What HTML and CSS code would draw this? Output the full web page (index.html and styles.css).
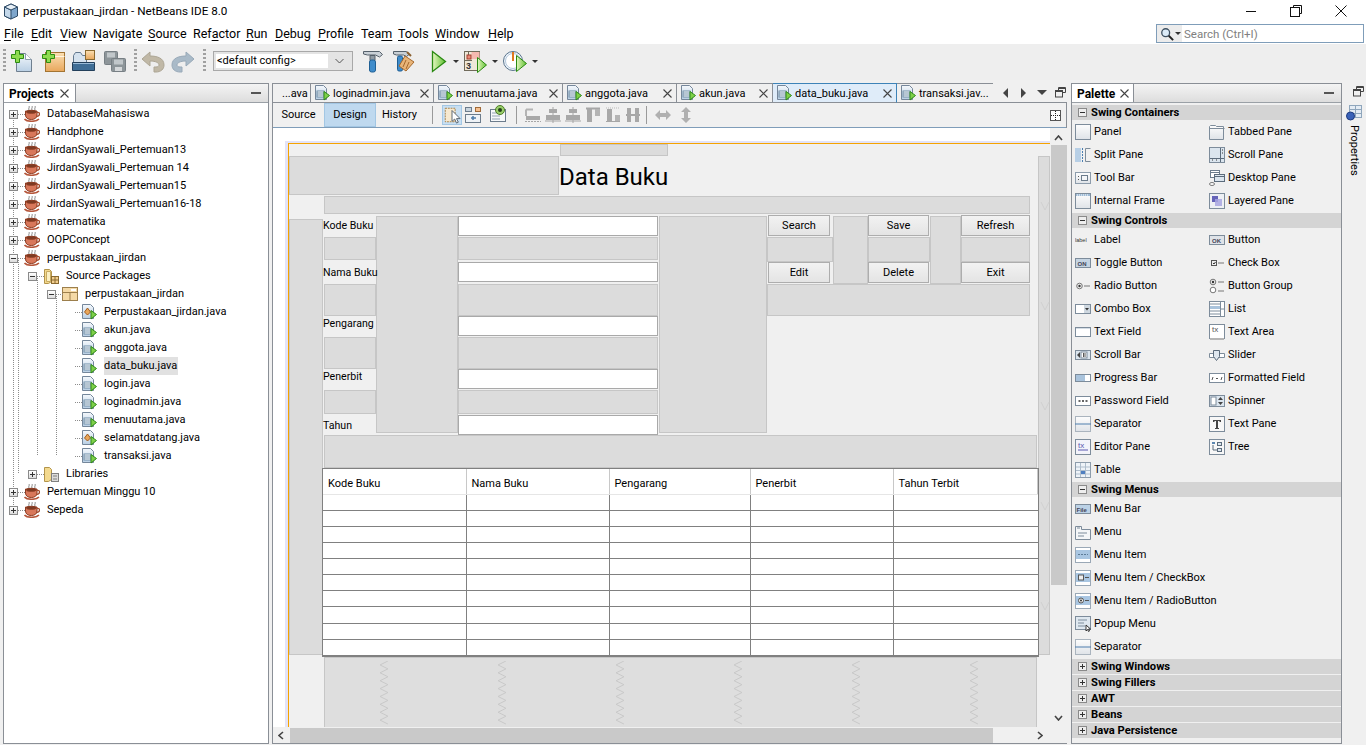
FILE: index.html
```html
<!DOCTYPE html>
<html lang="en">
<head>
<meta charset="utf-8">
<title>perpustakaan_jirdan - NetBeans IDE 8.0</title>
<link rel="stylesheet" href="styles.css">
</head>
<body>
<svg class="defs" width="0" height="0" aria-hidden="true">
  <defs>
    <linearGradient id="lb" x1="0" y1="0" x2="0" y2="1"><stop offset="0" stop-color="#f4f8fc"/><stop offset="1" stop-color="#b9cfe4"/></linearGradient>
    <linearGradient id="org" x1="0" y1="0" x2="0" y2="1"><stop offset="0" stop-color="#fbe0b4"/><stop offset="1" stop-color="#e8a75c"/></linearGradient>
    <linearGradient id="grn" x1="0" y1="0" x2="1" y2="0"><stop offset="0" stop-color="#e4f7c0"/><stop offset="1" stop-color="#5fc030"/></linearGradient>
    <linearGradient id="pan" x1="0" y1="0" x2="0" y2="1"><stop offset="0" stop-color="#fdfdfd"/><stop offset="1" stop-color="#dfe3e8"/></linearGradient>
    <symbol id="close" viewBox="0 0 9 9"><path d="M.5.500l8 8M8.500.500l-8 8" stroke="#444" stroke-width="1.100"/></symbol>
    <symbol id="coffee" viewBox="0 0 16 16">
      <path d="M5 0c1 1.200-1 2.500 0 4M8 0c1 1.200-1 2.500 0 4M11 0c1 1.200-1 2.500 0 4" fill="none" stroke="#8c8c8c"/>
      <path d="M1.500 5h11.500v4c0 3-2.500 4.500-5.700 4.500S1.500 12 1.500 9z" fill="#d8775a" stroke="#8d3c22"/>
      <ellipse cx="7.300" cy="5.800" rx="5" ry="1.500" fill="#7a3a22" stroke="#8d3c22"/>
      <path d="M13 6.500c3.500-.5 3.500 3.500-.5 4" fill="none" stroke="#a34a2c" stroke-width="1.300"/>
      <path d="M.5 13c3 3 11.500 3 14.500 0" fill="none" stroke="#b5563a" stroke-width="1.600"/>
    </symbol>
    <symbol id="srcpkg" viewBox="0 0 16 16">
      <path d="M1.500 1.500h5l2 2v10l-3 2h-4z" fill="#f3d98e" stroke="#b3944a"/>
      <path d="M3.500 3.500h4v10h-4z" fill="#fbf0c4" stroke="#c8ab62"/>
      <rect x="8.500" y="8.500" width="7" height="7" fill="#f2ce8e" stroke="#8a6a30"/>
      <path d="M8.500 12h7M12 8.500v7" stroke="#8a6a30"/>
    </symbol>
    <symbol id="pkg" viewBox="0 0 16 16">
      <rect x=".5" y="1.500" width="15" height="13" fill="#f4d9a6" stroke="#9c7f4c"/>
      <path d="M.5 6.500h15M8 6.500v8" stroke="#9c7f4c"/>
      <rect x="9" y="3" width="5" height="2" fill="#fff"/>
    </symbol>
    <symbol id="lib" viewBox="0 0 16 16">
      <path d="M1.500 1.500h5l2 2v10l-3 2h-4z" fill="#f3d98e" stroke="#b3944a"/>
      <rect x="8.500" y="7.500" width="7" height="8" fill="#dcdcdc" stroke="#808080"/>
      <path d="M10 10h4M10 13h4" stroke="#808080"/>
    </symbol>
    <symbol id="form" viewBox="0 0 16 16">
      <path d="M1.500 .5h8l3 3v11h-11z" fill="url(#lb)" stroke="#75879b"/>
      <rect x="3" y="6" width="7" height="6" fill="#fff" stroke="#6f8ea8"/>
      <path d="M3 8h7M3 10h7" stroke="#6f8ea8"/>
      <path d="M10 6.500l5.500 4-5.500 4.500z" fill="#7ed048" stroke="#2e8a18"/>
    </symbol>
    <symbol id="mainfile" viewBox="0 0 16 16">
      <path d="M1.500 .5h8l3 3v11h-11z" fill="url(#lb)" stroke="#75879b"/>
      <path d="M3.500 8l3-4 3 4-3 3z" fill="#e8a65a" stroke="#a05c20"/>
      <path d="M10 6.500l5.500 4-5.500 4.500z" fill="#7ed048" stroke="#2e8a18"/>
    </symbol>
    <symbol id="tnew" viewBox="0 0 24 24">
      <path d="M6.500 4.500h9l6 6v12h-15z" fill="url(#lb)" stroke="#6f7f8f"/>
      <path d="M15.500 4.500v6h6" fill="#fff" stroke="#8c9cac"/>
      <path d="M5.500 1.500h4v4h4v4h-4v4h-4v-4h-4v-4h4z" fill="#8edc50" stroke="#2d8c12"/>
    </symbol>
    <symbol id="tnewp" viewBox="0 0 24 24">
      <rect x="4.500" y="3.500" width="19" height="19" fill="url(#org)" stroke="#a37432"/>
      <path d="M4.500 7.500h19" stroke="#fff4e0"/>
      <path d="M5.500 1.500h4v4h4v4h-4v4h-4v-4h-4v-4h4z" fill="#8edc50" stroke="#2d8c12"/>
    </symbol>
    <symbol id="topen" viewBox="0 0 24 24">
      <path d="M1.500 6.500l2-3h5l2 3h4v8h-13z" fill="#d5e2ee" stroke="#62788e"/>
      <rect x="13.500" y="1.500" width="9" height="9" fill="url(#org)" stroke="#8a6a30"/>
      <path d="M.5 13.500h22v8H.5z" fill="#3f6d95" stroke="#233f5a"/>
      <path d="M1 14.500h21" stroke="#9abbd8"/>
    </symbol>
    <symbol id="tsave" viewBox="0 0 24 24">
      <rect x="1.500" y="2.500" width="13" height="13" rx="1" fill="#8d9599" stroke="#777f84"/>
      <rect x="4" y="3.500" width="8" height="5" fill="#c1c7ca"/>
      <rect x="8.500" y="9.500" width="14" height="13" rx="1" fill="#8d9599" stroke="#777f84"/>
      <rect x="11" y="10.500" width="9" height="5" fill="#c1c7ca"/>
      <rect x="12" y="18" width="7" height="4" fill="#d5d8da"/>
    </symbol>
    <symbol id="tundo" viewBox="0 0 24 24">
      <path d="M1 10l8-7v4c7 0 14 2 14 9 0 4-3 7-8 7h-2v-5h2c2 0 3-1 3-2 0-2-3-4-9-4v5z" fill="#c0b8a6" stroke="#aca594"/>
    </symbol>
    <symbol id="tredo" viewBox="0 0 24 24">
      <path d="M23 10l-8-7v4C8 7 1 9 1 16c0 4 3 7 8 7h2v-5H9c-2 0-3-1-3-2 0-2 3-4 9-4v5z" fill="#a9bac8" stroke="#98a9b8"/>
    </symbol>
    <symbol id="thammer" viewBox="0 0 24 24">
      <path d="M2.500 2.500h16l3 3-3 2.500-4-2h-8l-4-1z" fill="#c9d0d6" stroke="#56616b"/>
      <path d="M9 6.500h5v5H9z" fill="#8f9aa3" stroke="#56616b"/>
      <rect x="8.500" y="11" width="6" height="12" rx="2" fill="#3f8ccb" stroke="#1f5f94"/>
    </symbol>
    <symbol id="tclean" viewBox="0 0 24 24">
      <path d="M1.500 2.500h13l2.500 3-2.500 2-3-1.500h-7L1.500 5z" fill="#c9d0d6" stroke="#56616b"/>
      <rect x="5.500" y="7" width="5" height="15" rx="1.500" fill="#3f8ccb" stroke="#1f5f94"/>
      <path d="M13 7l9 6-8 9-7-5z" fill="#e8b478" stroke="#a5682c"/>
      <path d="M14 11l-3 7M17 13l-3 7" stroke="#a5682c"/>
      <path d="M15 3l4 4" stroke="#8a6030" stroke-width="2"/>
    </symbol>
    <symbol id="trun" viewBox="0 0 24 24">
      <path d="M6.500 2.500l13 10-13 10z" fill="url(#grn)" stroke="#2a8a12" stroke-width="1.300"/>
    </symbol>
    <symbol id="tdebug" viewBox="0 0 24 24">
      <rect x=".5" y="2.500" width="15" height="19" fill="#efe8d8" stroke="#706a5a"/>
      <rect x="7.500" y="3" width="8" height="7" fill="#f6b9b0"/>
      <path d="M1 11.500h7M4.500 3v3" stroke="#706a5a"/>
      <rect x="3" y="6" width="4" height="4" fill="#e88a78" stroke="#a43c2c"/>
      <text class="mini3" x="2" y="20">3</text>
      <path d="M13.500 8.500l9 7.500-9 7.500z" fill="url(#grn)" stroke="#2a8a12"/>
    </symbol>
    <symbol id="tprof" viewBox="0 0 24 24">
      <circle cx="10" cy="12" r="9.500" fill="#eef4fa" stroke="#59738c"/>
      <circle cx="10" cy="12" r="7.500" fill="#fff" stroke="#b4c8dc"/>
      <path d="M10 3v9" stroke="#e07a20" stroke-width="2"/>
      <path d="M13.500 6.500l10 8-10 8z" fill="url(#grn)" stroke="#2a8a12"/>
    </symbol>
    <symbol id="esel" viewBox="0 0 20 20">
      <rect x="2.500" y="2.500" width="11" height="15" fill="#f7e9cf" stroke="#a47b3c" stroke-dasharray="2 1"/>
      <path d="M10 5v12l3-2.500 2 4.500 2-1-2-4h4z" fill="#fff" stroke="#4d5a66"/>
    </symbol>
    <symbol id="econn" viewBox="0 0 20 20">
      <rect x="2.500" y="9.500" width="15" height="8" fill="#eef2f6" stroke="#6c7c8c"/>
      <rect x="2.500" y="2.500" width="6" height="4" fill="#c8d4de" stroke="#6c7c8c"/>
      <rect x="12.500" y="2.500" width="5" height="4" fill="#f6c090" stroke="#a06a38"/>
      <path d="M8 13h5M10 11v4" stroke="#4d7ba8" stroke-width="1.500"/>
    </symbol>
    <symbol id="eprev" viewBox="0 0 20 20">
      <rect x="2.500" y="4.500" width="15" height="12" fill="#f6f8fa" stroke="#6c7c8c"/>
      <path d="M4 8h8M4 11h8M4 14h8" stroke="#93a3b3"/>
      <circle cx="12" cy="5" r="4.500" fill="#9ad06c" stroke="#4e7c28"/>
      <circle cx="12" cy="5" r="2" fill="#24401a"/>
    </symbol>
    <symbol id="al1" viewBox="0 0 16 16"><path d="M0 14.500h16" stroke="#a6a6a6" stroke-dasharray="2 1"/><path d="M1 2.500h7M1 2.500v6.500" stroke="#b4b4b4" stroke-width="2" fill="none"/><rect x="1" y="9" width="14" height="4" fill="#a8a8a8"/></symbol>
    <symbol id="al2" viewBox="0 0 16 16"><path d="M8 0v16M0 14h16" stroke="#a6a6a6"/><rect x="4" y="2" width="8" height="4" fill="#a8a8a8"/><rect x="1" y="8" width="14" height="5" fill="#a8a8a8"/></symbol>
    <symbol id="al3" viewBox="0 0 16 16"><path d="M1 1.500h14" stroke="#a6a6a6" stroke-width="2"/><rect x="2" y="2" width="5" height="13" fill="#a8a8a8"/><rect x="10" y="2" width="5" height="7" fill="#b4b4b4"/></symbol>
    <symbol id="al4" viewBox="0 0 16 16"><path d="M1 14.500h14" stroke="#a6a6a6"/><path d="M1 1h14" stroke="#bbb" stroke-dasharray="1 1"/><rect x="2" y="2" width="5" height="12" fill="#a8a8a8"/><rect x="10" y="8" width="5" height="6" fill="#b4b4b4"/></symbol>
    <symbol id="al5" viewBox="0 0 16 16"><path d="M1 8h14" stroke="#a6a6a6" stroke-width="2"/><rect x="2" y="1" width="4" height="14" fill="#a8a8a8"/><rect x="10" y="1" width="4" height="14" fill="#a8a8a8"/></symbol>
    <symbol id="rsh" viewBox="0 0 16 16"><path d="M0 8l5-5v3h6V3l5 5-5 5v-3H5v3z" fill="#b0b0b0"/></symbol>
    <symbol id="rsv" viewBox="0 0 16 16"><path d="M8 0l5 5h-3v6h3l-5 5-5-5h3V5H3z" fill="#b0b0b0"/></symbol>
    <symbol id="restore" viewBox="0 0 11 11"><path d="M3.500 3V.5h7v5H8" fill="none" stroke="#444"/><path d="M3.500 1.500h7" stroke="#444"/><rect x=".5" y="3.500" width="7" height="6.500" fill="none" stroke="#444"/><path d="M.5 4.500h7" stroke="#444"/></symbol>

    <symbol id="p-panel" viewBox="0 0 16 16"><rect x=".5" y=".5" width="15" height="15" fill="url(#pan)" stroke="#7d8c9b"/></symbol>
    <symbol id="p-tab" viewBox="0 0 16 16"><path d="M.5 15.500V2.500l1-1h5l1 1h7v13z" fill="url(#pan)" stroke="#7d8c9b"/><path d="M.5 4.500h15" stroke="#7d8c9b"/></symbol>
    <symbol id="p-split" viewBox="0 0 16 16"><rect x="0" y="1" width="6" height="14" fill="#b7cfe6"/><path d="M10.500 1.500h5M10.500 14.500h5M10.500 1.500v13" stroke="#7d8c9b" fill="none"/><path d="M7.500 1v14" stroke="#4a7eb0" stroke-dasharray="2 1"/></symbol>
    <symbol id="p-scroll" viewBox="0 0 16 16"><rect x=".5" y=".5" width="15" height="15" fill="#dbe5ee" stroke="#7d8c9b"/><path d="M11.500 1v14M1 11.500h14" stroke="#5c6c7c"/><path d="M13 3h1M13 6h1M3 13h1M7 13h1" stroke="#333"/></symbol>
    <symbol id="p-tool" viewBox="0 0 16 16"><rect x=".5" y="2.500" width="15" height="11" fill="url(#pan)" stroke="#8d9cab"/><rect x="6.500" y="5.500" width="6" height="5" fill="#f4f6f8" stroke="#6c7c8c"/><path d="M3.500 6v1M3.500 9v1" stroke="#555"/></symbol>
    <symbol id="p-desk" viewBox="0 0 16 16"><rect x="1.500" y=".5" width="9" height="7" fill="#fff" stroke="#6c7c8c"/><path d="M1.500 2.500h9" stroke="#6c7c8c"/><rect x="5.500" y="4.500" width="10" height="7" fill="#dbe5ee" stroke="#5b6b7b"/><path d="M5.500 6.500h10" stroke="#5b6b7b"/><ellipse cx="3" cy="14" rx="2.500" ry="1.500" fill="#fff" stroke="#777"/></symbol>
    <symbol id="p-iframe" viewBox="0 0 16 16"><rect x=".5" y=".5" width="15" height="15" fill="url(#pan)" stroke="#7d8c9b"/><rect x="1" y="1" width="14" height="2" fill="#9dbad5"/><path d="M2 2h11" stroke="#fff" stroke-dasharray="1 1"/></symbol>
    <symbol id="p-layer" viewBox="0 0 16 16"><rect x=".5" y=".5" width="15" height="15" fill="#eef0f4" stroke="#7d8c9b"/><rect x="3" y="3" width="6" height="6" fill="#6563b8"/><rect x="6" y="6" width="7" height="7" fill="#a8a6e0" opacity=".85"/></symbol>
    <symbol id="p-label" viewBox="0 0 16 16"><text class="mini" x="0" y="10">label</text></symbol>
    <symbol id="p-ok" viewBox="0 0 16 16"><rect x=".5" y="3.500" width="15" height="9" fill="#dfe3e8" stroke="#7d8c9b"/><text class="mini mb" x="3" y="11">OK</text></symbol>
    <symbol id="p-on" viewBox="0 0 16 16"><rect x=".5" y="3.500" width="15" height="9" fill="#c5d4e2" stroke="#7d8c9b"/><text class="mini mb" x="2.500" y="11">ON</text></symbol>
    <symbol id="p-check" viewBox="0 0 16 16"><rect x="2.500" y="5.500" width="5" height="5" fill="#eee" stroke="#555"/><path d="M4 8l1 1 1.500-2" stroke="#333" fill="none"/><path d="M9 8h6" stroke="#777"/></symbol>
    <symbol id="p-radio" viewBox="0 0 16 16"><circle cx="4.500" cy="8" r="2.800" fill="#eee" stroke="#777"/><circle cx="4.500" cy="8" r="1.200" fill="#333"/><path d="M9 8h6" stroke="#777"/></symbol>
    <symbol id="p-group" viewBox="0 0 16 16"><circle cx="4" cy="4" r="2.800" fill="#eee" stroke="#777"/><circle cx="4" cy="4" r="1.200" fill="#333"/><circle cx="4" cy="12" r="2.800" fill="#fff" stroke="#777"/><path d="M9 4h6M9 13h6" stroke="#777"/></symbol>
    <symbol id="p-combo" viewBox="0 0 16 16"><rect x=".5" y="3.500" width="15" height="9" fill="#fff" stroke="#7d8c9b"/><rect x="9" y="4" width="6" height="8" fill="#cfd8e0"/><path d="M10 7h4l-2 2.500z" fill="#333"/></symbol>
    <symbol id="p-list" viewBox="0 0 16 16"><rect x=".5" y=".5" width="15" height="15" fill="#fff" stroke="#7d8c9b"/><rect x="1" y="5" width="10" height="3" fill="#a9c3dc"/><path d="M1 3h10M1 10h10M1 13h10" stroke="#7d8c9b"/><path d="M11.500 1v14M11.500 8h4" stroke="#7d8c9b"/></symbol>
    <symbol id="p-tf" viewBox="0 0 16 16"><rect x=".5" y="3.500" width="15" height="9" fill="#fff" stroke="#7d8c9b"/><path d="M1 4.500h14" stroke="#d5dde5"/></symbol>
    <symbol id="p-ta" viewBox="0 0 16 16"><rect x=".5" y=".5" width="15" height="14" fill="#fff" stroke="#7d8c9b"/><rect x="1" y="14" width="14" height="2" fill="#b5b5b5"/><text class="mini tx" x="3" y="8">tx</text></symbol>
    <symbol id="p-sb" viewBox="0 0 16 16"><rect x=".5" y="3.500" width="15" height="9" fill="#dbe5ee" stroke="#7d8c9b"/><path d="M5 5v6L2 8z" fill="#444"/><rect x="6" y="5" width="6" height="6" fill="#fff" stroke="#7d8c9b"/><path d="M8.500 6v4M10 6v4" stroke="#555"/></symbol>
    <symbol id="p-slider" viewBox="0 0 16 16"><path d="M.5 6.500h15v4H.5z" fill="#fff" stroke="#7d8c9b"/><path d="M4.500 3.500h6v6l-3 4-3-4z" fill="#dfe7ef" stroke="#5b6b7b"/></symbol>
    <symbol id="p-prog" viewBox="0 0 16 16"><rect x=".5" y="4.500" width="15" height="7" fill="#fff" stroke="#7d8c9b"/><rect x="1" y="5" width="9" height="6" fill="#a9c3dc"/></symbol>
    <symbol id="p-fmt" viewBox="0 0 16 16"><rect x=".5" y="3.500" width="15" height="9" fill="#fff" stroke="#7d8c9b"/><path d="M3 10l1-3M7 8.500h2M12 10l1-3" stroke="#555"/></symbol>
    <symbol id="p-pass" viewBox="0 0 16 16"><rect x=".5" y="3.500" width="15" height="9" fill="#fff" stroke="#7d8c9b"/><path d="M3.500 8h2M7 8h2M10.500 8h2" stroke="#333" stroke-width="1.500"/></symbol>
    <symbol id="p-spin" viewBox="0 0 16 16"><rect x=".5" y="2.500" width="15" height="11" fill="#dbe5ee" stroke="#7d8c9b"/><rect x="2" y="4" width="5" height="8" fill="#fff" stroke="#7d8c9b"/><path d="M9 7l2.500-3L14 7zM9 9l2.500 3L14 9z" fill="#444"/></symbol>
    <symbol id="p-sep" viewBox="0 0 16 16"><rect x=".5" y=".5" width="15" height="15" fill="url(#pan)" stroke="#aab4be"/><path d="M0 8h16" stroke="#4f7fae"/></symbol>
    <symbol id="p-tp" viewBox="0 0 16 16"><rect x=".5" y=".5" width="15" height="15" fill="#f7f7f7" stroke="#7d8c9b"/><path d="M4 4h8v2h-1l-1-1H9v7h1v1H6v-1h1V5H6L5 6H4z" fill="#444"/></symbol>
    <symbol id="p-ep" viewBox="0 0 16 16"><rect x=".5" y=".5" width="15" height="15" fill="#f3f3fa" stroke="#7d8c9b"/><text class="mini pv" x="3" y="9">tx</text><path d="M3 11h10" stroke="#5a58b0"/></symbol>
    <symbol id="p-tree" viewBox="0 0 16 16"><rect x=".5" y=".5" width="15" height="15" fill="#f7f7f7" stroke="#7d8c9b"/><rect x="3" y="3" width="3" height="2" fill="#5a86b0"/><rect x="8.500" y="3.500" width="4" height="3" fill="#dbe5ee" stroke="#5b6b7b"/><rect x="8.500" y="9.500" width="4" height="3" fill="#dbe5ee" stroke="#5b6b7b"/><path d="M4 6v5h4" fill="none" stroke="#5b6b7b"/></symbol>
    <symbol id="p-table" viewBox="0 0 16 16"><rect x=".5" y=".5" width="15" height="15" fill="#eef3f8" stroke="#8d9cab"/><path d="M1 5h14M1 8.500h14M1 12h14M5.500 1v14M10.500 1v14" stroke="#aebdcc"/><rect x="6" y="9" width="4" height="3" fill="#4f7fc0"/></symbol>
    <symbol id="p-mbar" viewBox="0 0 16 16"><rect x=".5" y="3.500" width="15" height="9" fill="#bcd2e6" stroke="#7d8c9b"/><text class="mini mb" x="1.500" y="10.500">File</text></symbol>
    <symbol id="p-menu" viewBox="0 0 16 16"><path d="M.5 15.500V2.500h6v3h9v10z" fill="#f4f6f8" stroke="#7d8c9b"/><path d="M2 4h3M3 9h9M3 12h6" stroke="#7d8c9b"/></symbol>
    <symbol id="p-mitem" viewBox="0 0 16 16"><rect x=".5" y=".5" width="15" height="15" fill="#fff" stroke="#9aa8b6"/><rect x="1" y="3" width="14" height="9" fill="#a9c6e2"/><path d="M3 7.500h10" stroke="#5d7c98" stroke-dasharray="2 1"/></symbol>
    <symbol id="p-mcheck" viewBox="0 0 16 16"><rect x=".5" y=".5" width="15" height="15" fill="#fff" stroke="#9aa8b6"/><rect x="1" y="3" width="14" height="9" fill="#a9c6e2"/><rect x="3.500" y="5" width="5" height="5" fill="#eee" stroke="#555"/><path d="M10 7.500h4" stroke="#555"/></symbol>
    <symbol id="p-mradio" viewBox="0 0 16 16"><rect x=".5" y=".5" width="15" height="15" fill="#fff" stroke="#9aa8b6"/><rect x="1" y="3" width="14" height="9" fill="#a9c6e2"/><circle cx="6" cy="7.500" r="2.500" fill="#eee" stroke="#555"/><circle cx="6" cy="7.500" r="1" fill="#333"/><path d="M10 7.500h4" stroke="#555"/></symbol>
    <symbol id="p-popup" viewBox="0 0 16 16"><rect x=".5" y=".5" width="15" height="13" fill="#dfe8f0" stroke="#7d8c9b"/><path d="M3 4h9M3 7h6M3 10h7" stroke="#7d8c9b"/><path d="M11 9v6l1.500-1.500 1 2 1-.5-1-2h2z" fill="#fff" stroke="#333"/></symbol>
    <symbol id="zig" viewBox="0 0 10 68"><path d="M9 0L1 4l8 4-8 4 8 4-8 4 8 4-8 4 8 4-8 4 8 4-8 4 8 4-8 4 8 4-8 4 8 4" fill="none" stroke="#c8c8c8"/></symbol>
  </defs>
</svg>

<div class="app">
  <header class="titlebar">
    <svg class="appicon" viewBox="0 0 16 16"><path d="M8 .5l6.500 3v9L8 15.500l-6.500-3v-9z" fill="#7ea6cc" stroke="#2d4a66"/><path d="M1.500 3.500L8 6.500v9l-6.500-3z" fill="#c4d8ea" stroke="#2d4a66"/><path d="M8 .5l6.500 3L8 6.500l-6.500-3z" fill="#e8f0f7" stroke="#2d4a66"/></svg>
    <span class="title">perpustakaan_jirdan - NetBeans IDE 8.0</span>
    <div class="winbtns">
      <svg class="winbtn" viewBox="0 0 12 12"><path d="M1 6.500h10" stroke="#111"/></svg>
      <svg class="winbtn" viewBox="0 0 12 12"><path d="M3.500 2.500v-2h8v8h-2" fill="none" stroke="#111"/><rect x=".5" y="2.500" width="9" height="9" fill="none" stroke="#111"/></svg>
      <svg class="winbtn" viewBox="0 0 12 12"><path d="M.5.500l11 11M11.500.500l-11 11" stroke="#111"/></svg>
    </div>
  </header>

  <nav class="menubar">
    <span class="mi m1"><u>F</u>ile</span><span class="mi m2"><u>E</u>dit</span><span class="mi m3"><u>V</u>iew</span><span class="mi m4"><u>N</u>avigate</span><span class="mi m5"><u>S</u>ource</span><span class="mi m6">Ref<u>a</u>ctor</span><span class="mi m7"><u>R</u>un</span><span class="mi m8"><u>D</u>ebug</span><span class="mi m9"><u>P</u>rofile</span><span class="mi m10">Tea<u>m</u></span><span class="mi m11"><u>T</u>ools</span><span class="mi m12"><u>W</u>indow</span><span class="mi m13"><u>H</u>elp</span>
    <div class="search">
      <div class="searchicon">
        <svg class="lens" viewBox="0 0 16 16"><circle cx="6.500" cy="6.500" r="4.500" fill="#dcebf7" stroke="#3d4f60" stroke-width="1.500"/><path d="M10 10l5 5" stroke="#222" stroke-width="2.200"/></svg>
        <span class="caret"></span>
      </div>
      <span class="searchtext">Search (Ctrl+I)</span>
    </div>
  </nav>

  <div class="toolbar">
    <span class="grip"></span>
    <svg class="ti i1"><use href="#tnew"/></svg>
    <svg class="ti i2"><use href="#tnewp"/></svg>
    <svg class="ti i2"><use href="#topen"/></svg>
    <svg class="ti i2"><use href="#tsave"/></svg>
    <span class="grip g2"></span>
    <svg class="ti i1"><use href="#tundo"/></svg>
    <svg class="ti i3"><use href="#tredo"/></svg>
    <span class="grip g3"></span>
    <div class="combo"><span class="combotext">&lt;default config&gt;</span><span class="combobtn"><svg class="chev" viewBox="0 0 9 6"><path d="M.5 1l4 4 4-4" fill="none" stroke="#555"/></svg></span></div>
    <svg class="ti i4"><use href="#thammer"/></svg>
    <svg class="ti i2"><use href="#tclean"/></svg>
    <svg class="ti i5"><use href="#trun"/></svg>
    <span class="caret c1"></span>
    <svg class="ti i6"><use href="#tdebug"/></svg>
    <span class="caret c2"></span>
    <svg class="ti i6"><use href="#tprof"/></svg>
    <span class="caret c3"></span>
  </div>

  <main class="workspace">
    <section class="panel projects">
      <div class="ptabs">
        <div class="ptab ptab-proj"><b class="ptabname">Projects</b><svg class="x"><use href="#close"/></svg></div>
        <div class="pfill"><span class="minbtn"></span></div>
      </div>
      <ul class="tree root">
        <li><div class="row"><span class="exp plus"></span><svg class="ic"><use href="#coffee"/></svg><span class="rt">DatabaseMahasiswa</span></div></li>
        <li><div class="row"><span class="exp plus"></span><svg class="ic"><use href="#coffee"/></svg><span class="rt">Handphone</span></div></li>
        <li><div class="row"><span class="exp plus"></span><svg class="ic"><use href="#coffee"/></svg><span class="rt">JirdanSyawali_Pertemuan13</span></div></li>
        <li><div class="row"><span class="exp plus"></span><svg class="ic"><use href="#coffee"/></svg><span class="rt">JirdanSyawali_Pertemuan 14</span></div></li>
        <li><div class="row"><span class="exp plus"></span><svg class="ic"><use href="#coffee"/></svg><span class="rt">JirdanSyawali_Pertemuan15</span></div></li>
        <li><div class="row"><span class="exp plus"></span><svg class="ic"><use href="#coffee"/></svg><span class="rt">JirdanSyawali_Pertemuan16-18</span></div></li>
        <li><div class="row"><span class="exp plus"></span><svg class="ic"><use href="#coffee"/></svg><span class="rt">matematika</span></div></li>
        <li><div class="row"><span class="exp plus"></span><svg class="ic"><use href="#coffee"/></svg><span class="rt">OOPConcept</span></div></li>
        <li><div class="row"><span class="exp"></span><svg class="ic"><use href="#coffee"/></svg><span class="rt">perpustakaan_jirdan</span></div>
          <ul class="tree sub">
            <li><div class="row"><span class="exp"></span><svg class="ic"><use href="#srcpkg"/></svg><span class="rt">Source Packages</span></div>
              <ul class="tree sub short">
                <li><div class="row"><span class="exp"></span><svg class="ic"><use href="#pkg"/></svg><span class="rt">perpustakaan_jirdan</span></div>
                  <ul class="tree sub">
                    <li><div class="row"><span class="noexp"></span><svg class="ic"><use href="#mainfile"/></svg><span class="rt">Perpustakaan_jirdan.java</span></div></li>
                    <li><div class="row"><span class="noexp"></span><svg class="ic"><use href="#form"/></svg><span class="rt">akun.java</span></div></li>
                    <li><div class="row"><span class="noexp"></span><svg class="ic"><use href="#form"/></svg><span class="rt">anggota.java</span></div></li>
                    <li><div class="row"><span class="noexp"></span><svg class="ic"><use href="#form"/></svg><span class="rt sel">data_buku.java</span></div></li>
                    <li><div class="row"><span class="noexp"></span><svg class="ic"><use href="#form"/></svg><span class="rt">login.java</span></div></li>
                    <li><div class="row"><span class="noexp"></span><svg class="ic"><use href="#form"/></svg><span class="rt">loginadmin.java</span></div></li>
                    <li><div class="row"><span class="noexp"></span><svg class="ic"><use href="#form"/></svg><span class="rt">menuutama.java</span></div></li>
                    <li><div class="row"><span class="noexp"></span><svg class="ic"><use href="#mainfile"/></svg><span class="rt">selamatdatang.java</span></div></li>
                    <li><div class="row"><span class="noexp"></span><svg class="ic"><use href="#form"/></svg><span class="rt">transaksi.java</span></div></li>
                  </ul>
                </li>
              </ul>
            </li>
            <li><div class="row"><span class="exp plus"></span><svg class="ic"><use href="#lib"/></svg><span class="rt">Libraries</span></div></li>
          </ul>
        </li>
        <li><div class="row"><span class="exp plus"></span><svg class="ic"><use href="#coffee"/></svg><span class="rt">Pertemuan Minggu 10</span></div></li>
        <li><div class="row"><span class="exp plus"></span><svg class="ic"><use href="#coffee"/></svg><span class="rt">Sepeda</span></div></li>
      </ul>
    </section>

    <section class="editor">
      <div class="etabs">
        <div class="etab et0"><span class="etname">...ava</span></div>
        <div class="etab et1"><svg class="ic"><use href="#form"/></svg><span class="etname">loginadmin.java</span><svg class="x"><use href="#close"/></svg></div>
        <div class="etab et2"><svg class="ic"><use href="#form"/></svg><span class="etname">menuutama.java</span><svg class="x"><use href="#close"/></svg></div>
        <div class="etab et3"><svg class="ic"><use href="#form"/></svg><span class="etname">anggota.java</span><svg class="x"><use href="#close"/></svg></div>
        <div class="etab et4"><svg class="ic"><use href="#form"/></svg><span class="etname">akun.java</span><svg class="x"><use href="#close"/></svg></div>
        <div class="etab et5 active"><svg class="ic"><use href="#form"/></svg><span class="etname">data_buku.java</span><svg class="x"><use href="#close"/></svg></div>
        <div class="etab et6"><svg class="ic"><use href="#form"/></svg><span class="etname">transaksi.jav...</span></div>
        <div class="enav">
          <span class="tri tl"></span><span class="tri tr"></span><span class="tri td"></span><svg class="rest"><use href="#restore"/></svg>
        </div>
      </div>
      <div class="ebody">
        <div class="etool">
          <span class="mode m-source">Source</span><span class="mode m-design">Design</span><span class="mode m-history">History</span>
          <span class="esep s1"></span>
          <span class="eact on"><svg class="eic"><use href="#esel"/></svg></span>
          <svg class="eic e2"><use href="#econn"/></svg>
          <svg class="eic e3"><use href="#eprev"/></svg>
          <span class="esep s2"></span>
          <svg class="al a1"><use href="#al1"/></svg>
          <svg class="al"><use href="#al2"/></svg>
          <svg class="al"><use href="#al2"/></svg>
          <svg class="al"><use href="#al3"/></svg>
          <svg class="al"><use href="#al4"/></svg>
          <svg class="al"><use href="#al5"/></svg>
          <span class="esep s3"></span>
          <svg class="al a2"><use href="#rsh"/></svg>
          <svg class="al a3"><use href="#rsv"/></svg>
          <svg class="gridic" viewBox="0 0 11 11"><rect x=".5" y=".5" width="10" height="10" fill="#fff" stroke="#555"/><path d="M5.500 1v9M1 5.500h9" stroke="#222" stroke-dasharray="1 1"/></svg>
        </div>
        <div class="designarea">
          <div class="canvas">
            <div class="surface">
              <div class="formframe"></div>
              <div class="gap-box b1"></div><div class="gap-box b2"></div><div class="gap-box b3"></div><div class="gap-box b4"><svg class="vm v1" viewBox="0 0 10 10"><path d="M1 1l4 8 4-8" fill="none" stroke="#d0d0d0"/></svg><svg class="vm v2" viewBox="0 0 10 10"><path d="M1 1l4 8 4-8" fill="none" stroke="#d0d0d0"/></svg><svg class="vm v3" viewBox="0 0 10 10"><path d="M1 1l4 8 4-8" fill="none" stroke="#d0d0d0"/></svg><svg class="vm v4" viewBox="0 0 10 10"><path d="M1 1l4 8 4-8" fill="none" stroke="#d0d0d0"/></svg><svg class="vm v5" viewBox="0 0 10 10"><path d="M1 1l4 8 4-8" fill="none" stroke="#d0d0d0"/></svg></div>
              <div class="gap-box b5"></div><div class="gap-box b6"></div><div class="gap-box b7"></div><div class="gap-box b8"></div><div class="gap-box b9"></div><div class="gap-box b10"></div><div class="gap-box b11"></div><div class="gap-box b12"></div><div class="gap-box b13"></div><div class="gap-box b14"></div><div class="gap-box b15"></div><div class="gap-box b16"></div><div class="gap-box b17"></div><div class="gap-box b18"></div><div class="gap-box b19"></div><div class="gap-box b20"></div><div class="gap-box b21"></div><div class="gap-box b22"></div>
              <div class="fl fl1">Kode Buku</div><div class="fl fl2">Nama Buku</div><div class="fl fl3">Pengarang</div><div class="fl fl4">Penerbit</div><div class="fl fl5">Tahun</div>
              <div class="ftitle">Data Buku</div>
              <div class="field f1"></div><div class="field f2"></div><div class="field f3"></div><div class="field f4"></div><div class="field f5"></div>
              <div class="fbtn bt1">Search</div><div class="fbtn bt2">Save</div><div class="fbtn bt3">Refresh</div><div class="fbtn bt4">Edit</div><div class="fbtn bt5">Delete</div><div class="fbtn bt6">Exit</div>
              <table class="ftable">
                <thead><tr><th>Kode Buku</th><th>Nama Buku</th><th>Pengarang</th><th>Penerbit</th><th>Tahun Terbit</th></tr></thead>
                <tbody>
                  <tr><td></td><td></td><td></td><td></td><td></td></tr>
                  <tr><td></td><td></td><td></td><td></td><td></td></tr>
                  <tr><td></td><td></td><td></td><td></td><td></td></tr>
                  <tr><td></td><td></td><td></td><td></td><td></td></tr>
                  <tr><td></td><td></td><td></td><td></td><td></td></tr>
                  <tr><td></td><td></td><td></td><td></td><td></td></tr>
                  <tr><td></td><td></td><td></td><td></td><td></td></tr>
                  <tr><td></td><td></td><td></td><td></td><td></td></tr>
                  <tr><td></td><td></td><td></td><td></td><td></td></tr>
                  <tr><td></td><td></td><td></td><td></td><td></td></tr>
                </tbody>
              </table>
              <div class="bottomgap">
                <svg class="zig"><use href="#zig"/></svg><svg class="zig"><use href="#zig"/></svg><svg class="zig"><use href="#zig"/></svg><svg class="zig"><use href="#zig"/></svg><svg class="zig"><use href="#zig"/></svg><svg class="zig"><use href="#zig"/></svg>
              </div>
            </div>
          </div>
          <div class="vscroll">
            <svg class="sarrow" viewBox="0 0 9 6"><path d="M1 5l3.500-4L8 5" fill="none" stroke="#444" stroke-width="1.600"/></svg>
            <div class="vthumb"></div>
            <svg class="sarrow down" viewBox="0 0 9 6"><path d="M1 1l3.500 4L8 1" fill="none" stroke="#444" stroke-width="1.600"/></svg>
          </div>
          <div class="hscroll">
            <svg class="harrow" viewBox="0 0 6 9"><path d="M5 1L1 4.500 5 8" fill="none" stroke="#444" stroke-width="1.600"/></svg>
            <div class="hthumb"></div>
            <svg class="harrow right" viewBox="0 0 6 9"><path d="M1 1l4 3.500L1 8" fill="none" stroke="#444" stroke-width="1.600"/></svg>
          </div>
        </div>
      </div>
    </section>

    <section class="panel palette">
      <div class="ptabs">
        <div class="ptab ptab-pal"><b class="ptabname">Palette</b><svg class="x"><use href="#close"/></svg></div>
        <div class="pfill"><span class="minbtn"></span></div>
      </div>
      <div class="palbody">
        <div class="phead"><span class="exp minus"></span>Swing Containers</div>
        <div class="pitems">
          <div class="pi"><svg class="pic"><use href="#p-panel"/></svg>Panel</div><div class="pi"><svg class="pic"><use href="#p-tab"/></svg>Tabbed Pane</div>
          <div class="pi"><svg class="pic"><use href="#p-split"/></svg>Split Pane</div><div class="pi"><svg class="pic"><use href="#p-scroll"/></svg>Scroll Pane</div>
          <div class="pi"><svg class="pic"><use href="#p-tool"/></svg>Tool Bar</div><div class="pi"><svg class="pic"><use href="#p-desk"/></svg>Desktop Pane</div>
          <div class="pi"><svg class="pic"><use href="#p-iframe"/></svg>Internal Frame</div><div class="pi"><svg class="pic"><use href="#p-layer"/></svg>Layered Pane</div>
        </div>
        <div class="phead"><span class="exp minus"></span>Swing Controls</div>
        <div class="pitems">
          <div class="pi"><svg class="pic"><use href="#p-label"/></svg>Label</div><div class="pi"><svg class="pic"><use href="#p-ok"/></svg>Button</div>
          <div class="pi"><svg class="pic"><use href="#p-on"/></svg>Toggle Button</div><div class="pi"><svg class="pic"><use href="#p-check"/></svg>Check Box</div>
          <div class="pi"><svg class="pic"><use href="#p-radio"/></svg>Radio Button</div><div class="pi"><svg class="pic"><use href="#p-group"/></svg>Button Group</div>
          <div class="pi"><svg class="pic"><use href="#p-combo"/></svg>Combo Box</div><div class="pi"><svg class="pic"><use href="#p-list"/></svg>List</div>
          <div class="pi"><svg class="pic"><use href="#p-tf"/></svg>Text Field</div><div class="pi"><svg class="pic"><use href="#p-ta"/></svg>Text Area</div>
          <div class="pi"><svg class="pic"><use href="#p-sb"/></svg>Scroll Bar</div><div class="pi"><svg class="pic"><use href="#p-slider"/></svg>Slider</div>
          <div class="pi"><svg class="pic"><use href="#p-prog"/></svg>Progress Bar</div><div class="pi"><svg class="pic"><use href="#p-fmt"/></svg>Formatted Field</div>
          <div class="pi"><svg class="pic"><use href="#p-pass"/></svg>Password Field</div><div class="pi"><svg class="pic"><use href="#p-spin"/></svg>Spinner</div>
          <div class="pi"><svg class="pic"><use href="#p-sep"/></svg>Separator</div><div class="pi"><svg class="pic"><use href="#p-tp"/></svg>Text Pane</div>
          <div class="pi"><svg class="pic"><use href="#p-ep"/></svg>Editor Pane</div><div class="pi"><svg class="pic"><use href="#p-tree"/></svg>Tree</div>
          <div class="pi"><svg class="pic"><use href="#p-table"/></svg>Table</div>
        </div>
        <div class="phead"><span class="exp minus"></span>Swing Menus</div>
        <div class="pitems single">
          <div class="pi"><svg class="pic"><use href="#p-mbar"/></svg>Menu Bar</div>
          <div class="pi"><svg class="pic"><use href="#p-menu"/></svg>Menu</div>
          <div class="pi"><svg class="pic"><use href="#p-mitem"/></svg>Menu Item</div>
          <div class="pi"><svg class="pic"><use href="#p-mcheck"/></svg>Menu Item / CheckBox</div>
          <div class="pi"><svg class="pic"><use href="#p-mradio"/></svg>Menu Item / RadioButton</div>
          <div class="pi"><svg class="pic"><use href="#p-popup"/></svg>Popup Menu</div>
          <div class="pi"><svg class="pic"><use href="#p-sep"/></svg>Separator</div>
        </div>
        <div class="phead"><span class="exp plus"></span>Swing Windows</div>
        <div class="phead"><span class="exp plus"></span>Swing Fillers</div>
        <div class="phead"><span class="exp plus"></span>AWT</div>
        <div class="phead"><span class="exp plus"></span>Beans</div>
        <div class="phead"><span class="exp plus"></span>Java Persistence</div>
      </div>
    </section>

    <aside class="strip">
      <svg class="rest sr"><use href="#restore"/></svg>
      <svg class="propic" viewBox="0 0 16 16"><rect x="3.500" y=".5" width="12" height="12" fill="#e4ecf4" stroke="#8fa6bc"/><path d="M3.500 4.500h12M3.500 8.500h12M9.500 1v11" stroke="#8fa6bc"/><circle cx="4.500" cy="11" r="4" fill="#3a62b8" stroke="#1f3c80"/></svg>
      <span class="vlabel">Properties</span>
    </aside>
  </main>
</div>
</body>
</html>
```
FILE: styles.css
```css
* { box-sizing: border-box; }
html, body { margin: 0; padding: 0; }
body {
  width: 1366px; height: 745px; overflow: hidden; background: #f0f0f0;
  font-family: Roboto, "Noto Sans", sans-serif; font-size: 11px; color: #000;
}
.defs { position: absolute; }
.mini { font: 5.500px "Liberation Sans", sans-serif; fill: #333; }
.mini.mb { font-weight: 700; font-size: 6px; fill: #445; }
.mini.pv { fill: #5a58b0; font-size: 8px; }
.mini.tx { font-size: 8px; fill: #555; }
.mini3 { font: 700 9px "Liberation Sans", sans-serif; fill: #333; }
.app { display: flex; flex-direction: column; width: 1366px; height: 745px; }

/* title + menu */
.titlebar { height: 22px; background: #fff; display: flex; align-items: center; padding-left: 3px; }
.appicon { width: 16px; height: 17px; margin-right: 4px; }
.title { font-size: 11.700px; }
.winbtns { margin-left: auto; display: flex; padding-right: 19px; gap: 33px; }
.winbtn { width: 12px; height: 12px; }
.menubar { height: 22px; background: #fff; display: flex; align-items: center; position: relative; font-size: 12.500px; }
.mi { white-space: nowrap; }
.mi u { text-underline-offset: 2px; }
.m1 { margin-left: 4px; width: 27px; } .m2 { width: 29px; } .m3 { width: 33px; } .m4 { width: 55px; }
.m5 { width: 45px; } .m6 { width: 53px; } .m7 { width: 29px; } .m8 { width: 43px; } .m9 { width: 43px; }
.m10 { width: 37px; } .m11 { width: 37px; } .m12 { width: 53px; } .m13 { width: 40px; }
.search { position: absolute; left: 1156px; top: 2px; width: 208px; height: 19px; border: 1px solid #7f9db9; background: #fff; display: flex; align-items: center; font-size: 11.500px; }
.searchicon { width: 25px; height: 17px; background: #ececec; display: flex; align-items: center; padding-left: 3px; gap: 1px; }
.lens { width: 14px; height: 14px; }
.caret { display: inline-block; width: 0; height: 0; border-left: 3px solid transparent; border-right: 3px solid transparent; border-top: 3px solid #333; }
.searchtext { color: #808080; margin-left: 2px; }

/* toolbar */
.toolbar { height: 36px; display: flex; align-items: center; padding: 0 0 2px 3px; background: #eeeeee; }
.grip { width: 3px; height: 24px; background: repeating-linear-gradient(to bottom, #a0a0a0 0 2px, transparent 2px 4px); }
.ti { width: 24px; height: 24px; flex: none; }
.i1 { margin-left: 4px; } .i2 { margin-left: 7px; } .i3 { margin-left: 6px; }
.g2 { margin-left: 7px; } .g3 { margin-left: 8px; }
.i4 { margin-left: 8px; } .i5 { margin-left: 10px; } .i6 { margin-left: 5px; }
.c1 { margin-left: 3px; } .c2 { margin-left: 4px; } .c3 { margin-left: 5px; }
.combo { margin-left: 7px; width: 140px; height: 20px; border: 1px solid #a8a8a8; background: #e4e4e4; display: flex; padding: 2px; }
.combotext { width: 112px; background: #fff; padding-left: 1px; line-height: 14px; }
.combobtn { flex: 1; display: flex; align-items: center; justify-content: center; }
.chev { width: 9px; height: 6px; }

/* layout */
.workspace { flex: 1; display: flex; min-height: 0; padding: 3px 0 1px 3px; }
.panel { display: flex; flex-direction: column; }
.projects { width: 266px; border: 1px solid #8a8f96; border-top: 0; margin-right: 3px; background: #fff; }
.ptabs { height: 20px; display: flex; flex: none; border-bottom: 1px solid #9aa0a6; }
.ptab { background: #fff; display: flex; align-items: center; border-top: 1px solid #8a8f96; border-right: 1px solid #8a8f96; padding-left: 5px; }
.ptab-proj { width: 72px; }
.ptab-pal { width: 62px; }
.ptabname { font-weight: 700; font-size: 12px; padding-top: 1px; }
.x { width: 9px; height: 9px; flex: none; }
.ptab .x { margin-left: auto; margin-right: 6px; }
.ptab-pal .x { margin-right: 4px; }
.pfill { flex: 1; background: linear-gradient(#f4f4f4, #dddddd); border-top: 1px solid #8a8f96; display: flex; align-items: center; justify-content: flex-end; padding-right: 7px; }
.minbtn { width: 10px; height: 2px; background: #555; }

/* tree */
.tree { list-style: none; margin: 0; padding: 0; position: relative; }
.root { padding-left: 5px; margin-top: 2px; }
.sub { padding-left: 19px; }
.tree::before { content: ""; position: absolute; top: -9px; bottom: 9px; width: 1px; background: repeating-linear-gradient(to bottom, #8c8c8c 0 1px, transparent 1px 2px); left: 9px; }
.root::before { top: 9px; }
.row { height: 18px; display: flex; align-items: center; position: relative; white-space: nowrap; }
.exp { width: 9px; height: 9px; border: 1px solid #8a8a8a; background: linear-gradient(#fff, #dcdcdc); position: relative; flex: none; z-index: 1; }
.exp::before { content: ""; position: absolute; left: 1px; top: 3px; width: 5px; height: 1px; background: #333; }
.exp.plus::after { content: ""; position: absolute; left: 3px; top: 1px; width: 1px; height: 5px; background: #333; }
.noexp { width: 9px; flex: none; }
.row::before { content: ""; position: absolute; left: 9px; width: 7px; height: 1px; top: 9px; background: repeating-linear-gradient(to right, #8c8c8c 0 1px, transparent 1px 2px); }
.ic { width: 16px; height: 16px; flex: none; margin-left: 6px; }
.rt { margin-left: 7px; padding-right: 1px; line-height: 18px; }
.rt.sel { background: #e1e1e1; }

/* editor */
.editor { width: 795px; display: flex; flex-direction: column; }
.etabs { height: 20px; display: flex; flex: none; background: #f0f0f0; }
.etab { display: flex; align-items: center; border: 1px solid #8a8f96; border-left: 0; height: 20px; background: #f0f0f0; padding-left: 3px; position: relative; }
.etab .ic { margin-left: 0; }
.etname { margin-left: 3px; white-space: nowrap; }
.etab .x { position: absolute; right: 4px; top: 5px; }
.et0 { width: 39px; border-left: 1px solid #8a8f96; padding-left: 6px; }
.et0 .etname { margin-left: 3px; }
.et1 { width: 123px; } .et2 { width: 129px; } .et3 { width: 114px; } .et4 { width: 96px; } .et5 { width: 124px; } .et6 { width: 96px; border-right: 0; }
.active { background: #dfecf9; border-top-color: #3d83b8; border-right-color: #3d83b8; }
.enav { flex: 1; display: flex; align-items: center; padding-left: 10px; border-bottom: 1px solid #8a8f96; height: 20px; }
.tri { width: 0; height: 0; display: block; }
.tl { border-top: 5px solid transparent; border-bottom: 5px solid transparent; border-right: 5px solid #444; }
.tr { margin-left: 13px; border-top: 5px solid transparent; border-bottom: 5px solid transparent; border-left: 5px solid #444; }
.td { margin-left: 11px; border-left: 5px solid transparent; border-right: 5px solid transparent; border-top: 5px solid #444; }
.rest { width: 11px; height: 11px; flex: none; margin-left: 8px; }
.ebody { flex: 1; display: flex; flex-direction: column; min-height: 0; border: 1px solid #8a8f96; border-top: 0; }
.etool { height: 25px; flex: none; display: flex; align-items: center; border-bottom: 1px solid #7f9db9; background: #f0f0f0; }
.mode { height: 24px; line-height: 24px; text-align: center; }
.m-source { width: 51px; } .m-design { width: 52px; background: #bfd9ef; border: 1px solid #a3c7e4; line-height: 22px; } .m-history { width: 47px; }
.esep { width: 1px; height: 18px; background: #9a9a9a; }
.s1 { margin-left: 9px; } .s2 { margin-left: 8px; } .s3 { margin-left: 5px; }
.eact { width: 20px; height: 20px; margin-left: 9px; background: #c8dff2; border: 1px solid #a3c7e4; display: flex; }
.eic { width: 20px; height: 20px; flex: none; }
.eact .eic { width: 18px; height: 18px; }
.e2 { margin-left: 1px; } .e3 { margin-left: 5px; }
.al { width: 16px; height: 16px; flex: none; margin-left: 4px; }
.a1 { margin-left: 8px; } .a2 { margin-left: 8px; } .a3 { margin-left: 7px; }
.gridic { width: 11px; height: 11px; margin-left: auto; margin-right: 5px; }

.designarea { flex: 1; min-height: 0; display: grid; grid-template-columns: 777px 17px; grid-template-rows: 599px 16px; }
.canvas { background: #fff; position: relative; overflow: hidden; }
.surface { position: absolute; left: 0; top: 0; width: 777px; height: 599px; }
.formframe { position: absolute; left: 12px; top: 13px; width: 765px; height: 586px; background: #f0f0f0; border-left: 3px solid #e3e3f8; border-top: 2px solid #e3e3f8; box-shadow: inset 1px 1px 0 #f5a300; }
.gap-box { position: absolute; background: #dcdcdc; border: 1px solid #c6c6c6; }
.b1 { left: 287px; top: 16px; width: 108px; height: 12px; }
.b2 { left: 16px; top: 28px; width: 270px; height: 39px; }
.b3 { left: 51px; top: 68px; width: 706px; height: 18px; }
.b4 { left: 765px; top: 28px; width: 12px; height: 499px; }
.b5 { left: 16px; top: 91px; width: 34px; height: 436px; }
.b6 { left: 103px; top: 88px; width: 82px; height: 217px; }
.b7 { left: 51px; top: 109px; width: 52px; height: 23px; }
.b8 { left: 185px; top: 109px; width: 200px; height: 23px; }
.b9 { left: 51px; top: 156px; width: 52px; height: 32px; }
.b10 { left: 185px; top: 156px; width: 200px; height: 32px; }
.b11 { left: 51px; top: 209px; width: 52px; height: 32px; }
.b12 { left: 185px; top: 209px; width: 200px; height: 32px; }
.b13 { left: 51px; top: 262px; width: 52px; height: 24px; }
.b14 { left: 185px; top: 262px; width: 200px; height: 24px; }
.b15 { left: 386px; top: 88px; width: 108px; height: 217px; }
.b16 { left: 494px; top: 109px; width: 66px; height: 25px; }
.b17 { left: 560px; top: 88px; width: 35px; height: 68px; }
.b18 { left: 595px; top: 109px; width: 62px; height: 25px; }
.b19 { left: 657px; top: 88px; width: 31px; height: 68px; }
.b20 { left: 688px; top: 109px; width: 69px; height: 25px; }
.b21 { left: 51px; top: 307px; width: 713px; height: 33px; }
.b22 { left: 494px; top: 156px; width: 263px; height: 32px; }
.vm { position: absolute; left: 1px; width: 10px; height: 10px; }
.v1 { top: 44px; } .v2 { top: 144px; } .v3 { top: 244px; } .v4 { top: 344px; } .v5 { top: 444px; }
.fl { position: absolute; left: 50px; line-height: 16px; white-space: nowrap; font-size: 10.600px; }
.fl1 { top: 90px; } .fl2 { top: 137px; } .fl3 { top: 188px; } .fl4 { top: 241px; } .fl5 { top: 290px; }
.ftitle { position: absolute; left: 286px; top: 31px; font-size: 24px; line-height: 36px; white-space: nowrap; }
.field { position: absolute; left: 185px; width: 200px; height: 20px; background: #fff; border: 1px solid #a9a9a9; }
.f1 { top: 88px; } .f2 { top: 134px; } .f3 { top: 188px; } .f4 { top: 241px; } .f5 { top: 287px; }
.fbtn { position: absolute; height: 21px; line-height: 19px; text-align: center; background: linear-gradient(#f2f2f2, #e4e4e4); border: 1px solid #adadad; }
.bt1, .bt4 { left: 495px; width: 62px; }
.bt2, .bt5 { left: 595px; width: 61px; }
.bt3, .bt6 { left: 688px; width: 69px; }
.bt1, .bt2, .bt3 { top: 87px; }
.bt4, .bt5, .bt6 { top: 134px; }
.ftable { position: absolute; left: 50px; top: 341px; width: 715px; height: 187px; border-collapse: collapse; table-layout: fixed; background: #fff; outline: 1px solid #808080; }
.ftable th { height: 25px; font-weight: 400; text-align: left; padding: 4px 0 0 5px; border-right: 1px solid #c8c8c8; border-bottom: 1px solid #e6e6e6; }
.ftable th:first-child { width: 143px; }
.ftable th:nth-child(2) { width: 143px; }
.ftable th:nth-child(3) { width: 141px; }
.ftable th:nth-child(4) { width: 143px; }
.ftable td { height: 16px; padding: 0; border: 1px solid #808080; border-top: 0; }
.ftable td:first-child { border-left: 0; } .ftable td:last-child { border-right: 0; }
.bottomgap { position: absolute; left: 51px; top: 529px; width: 713px; height: 70px; background: #dedede; border: 1px solid #c6c6c6; border-bottom: 0; display: flex; padding: 3px 0 0 53px; gap: 106px; }
.zig { width: 12px; height: 67px; flex: none; }
.vscroll { background: #f0f0f0; display: flex; flex-direction: column; align-items: center; padding-top: 7px; grid-row: 1; grid-column: 2; }
.sarrow { width: 9px; height: 6px; flex: none; }
.vthumb { width: 16px; height: 440px; background: #c9c9c9; margin-top: 4px; flex: none; }
.sarrow.down { margin-top: auto; margin-bottom: 6px; }
.hscroll { grid-row: 2; grid-column: 1 / span 2; background: #f0f0f0; display: flex; align-items: center; padding-left: 5px; }
.harrow { width: 6px; height: 9px; flex: none; }
.hthumb { width: 703px; height: 15px; background: #c9c9c9; margin-left: 6px; }
.harrow.right { margin-left: 44px; }

/* palette */
.palette { width: 271px; margin-left: 4px; border: 1px solid #8a8f96; border-top: 0; background: #f0f0f0; }
.palbody { flex: 1; padding-top: 2px; }
.phead { height: 15px; background: #d4d4d4; font-weight: 700; font-size: 11.200px; display: flex; align-items: center; margin-bottom: 1px; padding-left: 6px; gap: 4px; line-height: 15px; }
.phead .exp { background: #eee; }
.pitems { display: grid; grid-template-columns: 134px 134px; grid-auto-rows: 23px; padding-left: 3px; margin-top: -1px; padding-bottom: 1px; }
.pitems.single { grid-template-columns: 1fr; }
.pi { display: flex; align-items: center; gap: 3px; white-space: nowrap; }
.pic { width: 16px; height: 16px; flex: none; }

/* strip */
.strip { flex: 1; display: flex; flex-direction: column; align-items: center; padding-top: 3px; }
.propic { width: 16px; height: 16px; margin-top: 8px; }
.vlabel { writing-mode: vertical-rl; margin-top: 4px; }
```
